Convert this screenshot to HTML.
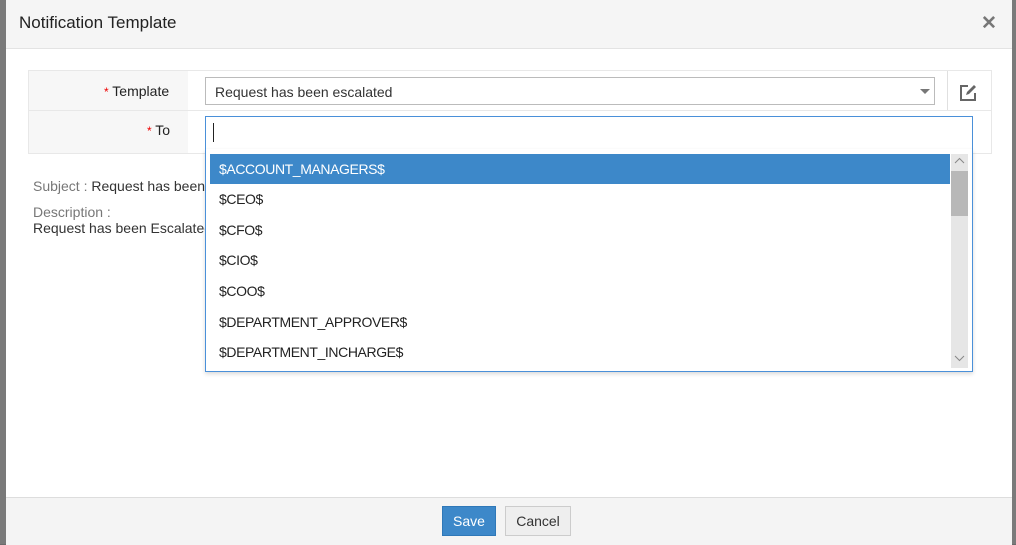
<!DOCTYPE html>
<html><head><style>
body{margin:0;width:1016px;height:544px;overflow:hidden;background:#6b6b6b;font-family:"Liberation Sans",Arial,sans-serif;position:relative}
.a{position:absolute}
.modal{left:6px;top:0;width:1006px;height:544px;background:#fff}
.dd .a{letter-spacing:-0.4px}
</style></head><body>
<div class="a" style="left:0;top:0;width:6px;height:544px;background:#7a7a7a"></div>
<div class="a" style="left:1012px;top:0;width:4px;height:544px;background:#7a7a7a"></div>
<div class="a modal">
 <div class="a" style="left:0;top:0;width:1006px;height:48px;background:#f5f5f5;border-bottom:1px solid #e3e3e3"></div>
 <div class="a" style="left:13px;top:13px;font-size:17px;color:#222">Notification Template</div>
 <div class="a" style="left:975px;top:12px;font-size:19px;color:#777;font-weight:bold">✕</div>
 <div class="a" style="left:22px;top:70px;width:962px;height:82px;border:1px solid #e8e8e8;background:#fff"></div>
 <div class="a" style="left:23px;top:71px;width:159px;height:82px;background:#f7f7f7"></div>
 <div class="a" style="left:23px;top:110px;width:962px;height:1px;background:#e8e8e8"></div>
 <div class="a" style="left:941px;top:71px;width:1px;height:39px;background:#e0e0e0"></div>
 <div class="a" style="left:98px;top:83px;font-size:14px;color:#222"><span style="color:#e00;font-size:12px">*</span> Template</div>
 <div class="a" style="left:141px;top:122px;font-size:14px;color:#222"><span style="color:#e00;font-size:12px">*</span> To</div>
 <div class="a" style="left:199px;top:77px;width:728px;height:26px;border:1px solid #bbb;background:#fff"></div>
 <div class="a" style="left:209px;top:84px;font-size:14px;color:#333">Request has been escalated</div>
 <div class="a" style="left:914px;top:89px;width:0;height:0;border-left:5px solid transparent;border-right:5px solid transparent;border-top:5px solid #777"></div>
 <svg class="a" style="left:953px;top:84px" width="18" height="18" viewBox="0 0 18 18"><path d="M9 2H2v14h14V9" fill="none" stroke="#666" stroke-width="2"/><path d="M7 11l1-3 7-7 2 2-7 7z" fill="#666"/></svg>
 <div class="a" style="left:199px;top:116px;width:766px;height:32px;border:1px solid #4a90d9;background:#fff"></div>
 <div class="a" style="left:207px;top:123px;width:1px;height:19px;background:#222"></div>
 <div class="a" style="left:27px;top:178px;font-size:14px;color:#777">Subject : <span style="color:#333">Request has been</span></div>
 <div class="a" style="left:27px;top:204px;font-size:14px;color:#777">Description :</div>
 <div class="a" style="left:27px;top:220px;font-size:14px;color:#333">Request has been Escalated</div>
 <div class="a dd" style="left:199px;top:149px;width:766px;height:222px;border:1px solid #4a90d9;border-top:none;background:#fff;box-shadow:0 2px 4px rgba(0,0,0,.15);font-size:14px;color:#222">
  <div class="a" style="left:4px;top:5px;width:740px;height:30px;background:#3d88c9"></div>
  <div class="a" style="left:13px;top:12px;color:#fff">$ACCOUNT_MANAGERS$</div>
  <div class="a" style="left:13px;top:42px">$CEO$</div>
  <div class="a" style="left:13px;top:73px">$CFO$</div>
  <div class="a" style="left:13px;top:103px">$CIO$</div>
  <div class="a" style="left:13px;top:134px">$COO$</div>
  <div class="a" style="left:13px;top:165px">$DEPARTMENT_APPROVER$</div>
  <div class="a" style="left:13px;top:195px">$DEPARTMENT_INCHARGE$</div>
  <div class="a" style="left:745px;top:5px;width:17px;height:214px;background:#e6e6e6"></div>
  <div class="a" style="left:745px;top:22px;width:17px;height:45px;background:#b8b8b8"></div>
  <svg class="a" style="left:748px;top:8px" width="11" height="8"><path d="M1 6l4.5-4.5L10 6" fill="none" stroke="#888"/></svg>
  <svg class="a" style="left:748px;top:205px" width="11" height="8"><path d="M1 2l4.5 4.5L10 2" fill="none" stroke="#888"/></svg>
 </div>
 <div class="a" style="left:0;top:497px;width:1006px;height:47px;background:#f4f4f4;border-top:1px solid #ddd"></div>
 <div class="a" style="left:436px;top:506px;width:52px;height:28px;background:#3d88c9;border:1px solid #2f78b8;color:#fff;font-size:14px;text-align:center;line-height:28px">Save</div>
 <div class="a" style="left:499px;top:506px;width:64px;height:28px;background:#eee;border:1px solid #ccc;color:#333;font-size:14px;text-align:center;line-height:28px">Cancel</div>
</div>
</body></html>
